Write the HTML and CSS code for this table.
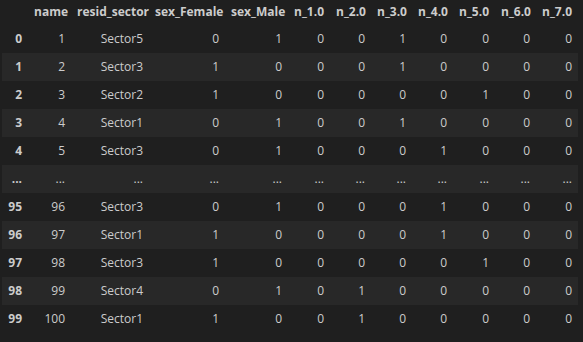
FILE: index.html
```html
<!DOCTYPE html>
<html>
<head>
<meta charset="utf-8">
<link rel="stylesheet" href="styles.css">
</head>
<body>
<table class="df">
  <colgroup>
    <col class="w-idx"><col class="w-name"><col class="w-sector"><col class="w-fem"><col class="w-male">
    <col class="w-n1"><col class="w-n"><col class="w-n"><col class="w-n"><col class="w-n1"><col class="w-n"><col class="w-n1">
  </colgroup>
  <thead>
    <tr><th></th><th>name</th><th>resid_sector</th><th>sex_Female</th><th>sex_Male</th><th>n_1.0</th><th>n_2.0</th><th>n_3.0</th><th>n_4.0</th><th>n_5.0</th><th>n_6.0</th><th>n_7.0</th></tr>
  </thead>
  <tbody>
    <tr><th>0</th><td>1</td><td>Sector5</td><td>0</td><td>1</td><td>0</td><td>0</td><td>1</td><td>0</td><td>0</td><td>0</td><td>0</td></tr>
    <tr><th>1</th><td>2</td><td>Sector3</td><td>1</td><td>0</td><td>0</td><td>0</td><td>1</td><td>0</td><td>0</td><td>0</td><td>0</td></tr>
    <tr><th>2</th><td>3</td><td>Sector2</td><td>1</td><td>0</td><td>0</td><td>0</td><td>0</td><td>0</td><td>1</td><td>0</td><td>0</td></tr>
    <tr><th>3</th><td>4</td><td>Sector1</td><td>0</td><td>1</td><td>0</td><td>0</td><td>1</td><td>0</td><td>0</td><td>0</td><td>0</td></tr>
    <tr><th>4</th><td>5</td><td>Sector3</td><td>0</td><td>1</td><td>0</td><td>0</td><td>0</td><td>1</td><td>0</td><td>0</td><td>0</td></tr>
    <tr><th>...</th><td>...</td><td>...</td><td>...</td><td>...</td><td>...</td><td>...</td><td>...</td><td>...</td><td>...</td><td>...</td><td>...</td></tr>
    <tr><th>95</th><td>96</td><td>Sector3</td><td>0</td><td>1</td><td>0</td><td>0</td><td>0</td><td>1</td><td>0</td><td>0</td><td>0</td></tr>
    <tr><th>96</th><td>97</td><td>Sector1</td><td>1</td><td>0</td><td>0</td><td>0</td><td>0</td><td>1</td><td>0</td><td>0</td><td>0</td></tr>
    <tr><th>97</th><td>98</td><td>Sector3</td><td>1</td><td>0</td><td>0</td><td>0</td><td>0</td><td>0</td><td>1</td><td>0</td><td>0</td></tr>
    <tr><th>98</th><td>99</td><td>Sector4</td><td>0</td><td>1</td><td>0</td><td>1</td><td>0</td><td>0</td><td>0</td><td>0</td><td>0</td></tr>
    <tr><th>99</th><td>100</td><td>Sector1</td><td>1</td><td>0</td><td>0</td><td>1</td><td>0</td><td>0</td><td>0</td><td>0</td><td>0</td></tr>
  </tbody>
</table>
</body>
</html>
```
FILE: styles.css
```css
html, body {
  margin: 0;
  padding: 0;
  background: #1f1f1f;
}
body {
  padding-left: 2px;
  font-family: "Open Sans", "Noto Sans", sans-serif;
  font-size: 12px;
  color: #cccccc;
}
.df {
  border-collapse: collapse;
  border-spacing: 0;
  table-layout: fixed;
  width: 576px;
}
.w-idx { width: 26px; }
.w-name { width: 43px; }
.w-sector { width: 78px; }
.w-fem { width: 76px; }
.w-male { width: 63px; }
.w-n1 { width: 42px; }
.w-n { width: 41px; }
.df th, .df td {
  text-align: right;
  padding: 0 6px;
  white-space: nowrap;
  line-height: 16px;
}
.df thead th {
  height: 24px;
  padding-bottom: 1px;
  padding-top: 0;
  font-weight: 700;
  vertical-align: middle;
}
.df tbody th, .df tbody td {
  height: 28px;
  padding-top: 0;
  padding-bottom: 0;
  vertical-align: middle;
}
.df tbody th {
  font-weight: 700;
}
.df tbody tr:nth-child(even) {
  background: #282828;
}
```
